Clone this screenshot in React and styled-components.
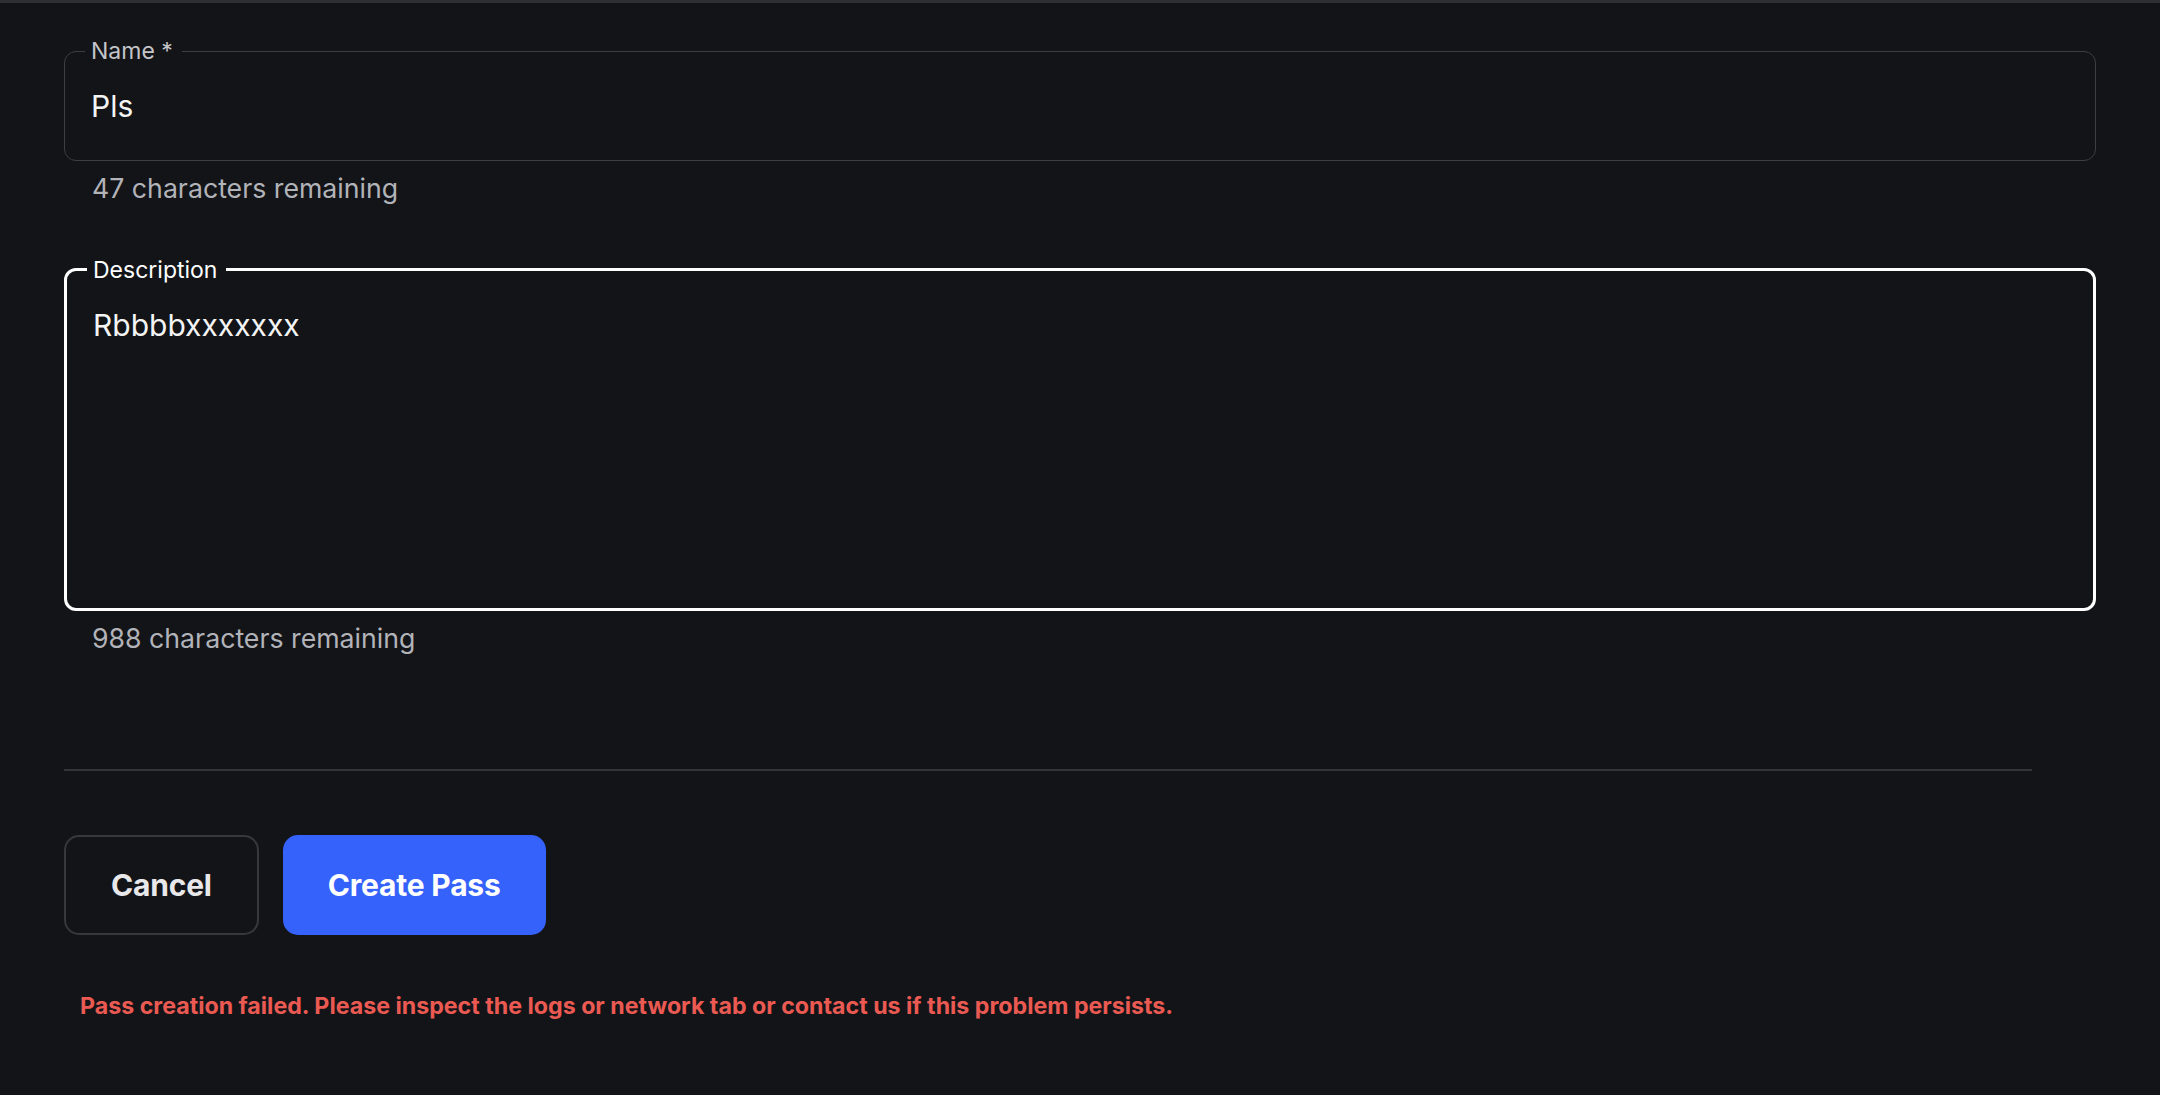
import React, { useState } from "react";
import styled, { createGlobalStyle } from "styled-components";

const GlobalStyle = createGlobalStyle`
  html, body {
    margin: 0;
    padding: 0;
    background: #131418;
  }
  body {
    font-family: Inter, "Noto Sans", "Liberation Sans", sans-serif;
    color: #f2f2f3;
  }
`;

const Page = styled.div`
  min-height: 1095px;
  box-sizing: border-box;
  border-top: 3px solid #2e2f33;
  padding: 34px 64px 0 64px;
`;

const Form = styled.form`
  display: flex;
  flex-direction: column;
`;

const Field = styled.fieldset`
  margin: 0;
  padding: 0 26px ${(p) => (p.$focused ? "34px" : "35.5px")} 26px;
  border: ${(p) => (p.$focused ? "3px solid #ffffff" : "1.5px solid #3d3e43")};
  border-radius: 12px;
  min-width: 0;
`;

const Legend = styled.legend`
  margin-left: -6px;
  padding: 0 9px 0 6px;
  font-size: 23px;
  line-height: 28px;
  color: ${(p) => (p.$focused ? "#ffffff" : "#c4c5c9")};
`;

const Input = styled.input`
  display: block;
  width: 100%;
  box-sizing: border-box;
  margin-top: 23px;
  padding: 0;
  border: none;
  outline: none;
  background: transparent;
  font-family: inherit;
  font-size: 30px;
  line-height: 36px;
  height: 36px;
  color: #f4f4f5;
`;

const TextArea = styled.textarea`
  display: block;
  width: 100%;
  box-sizing: border-box;
  margin-top: 23px;
  padding: 0;
  border: none;
  outline: none;
  resize: none;
  background: transparent;
  font-family: inherit;
  font-size: 30px;
  line-height: 36px;
  height: 267px;
  color: #f4f4f5;
`;

const Helper = styled.p`
  margin: 11px 0 0 28px;
  font-size: 26.7px;
  line-height: 32px;
  color: #b2b3b8;
`;

const Spacer = styled.div`
  height: ${(p) => p.$h}px;
`;

const Divider = styled.hr`
  margin: 115px 64px 0 0;
  border: none;
  height: 2px;
  background: #333438;
`;

const Actions = styled.div`
  display: flex;
  gap: 24px;
  margin-top: 64px;
`;

const Button = styled.button`
  height: 100px;
  padding: 0 ${(p) => (p.$primary ? "43px" : "45px")};
  box-sizing: border-box;
  border-radius: 15px;
  border: 2px solid ${(p) => (p.$primary ? "#3562fa" : "#37383d")};
  background: ${(p) => (p.$primary ? "#3562fa" : "transparent")};
  color: ${(p) => (p.$primary ? "#ffffff" : "#e8e8ea")};
  font-family: inherit;
  font-size: 30px;
  font-weight: 700;
  letter-spacing: -0.2px;
  cursor: pointer;
`;

const ErrorText = styled.p`
  margin: 57px 0 0 16px;
  font-size: 23.2px;
  line-height: 28px;
  font-weight: 700;
  color: #ea5a52;
`;

const App = () => {
  const [name, setName] = useState("Pls");
  const [desc, setDesc] = useState("Rbbbbxxxxxxx");

  return (
    <>
      <GlobalStyle />
      <Page>
        <Form onSubmit={(e) => e.preventDefault()}>
          <Field>
            <Legend>Name *</Legend>
            <Input value={name} onChange={(e) => setName(e.target.value)} />
          </Field>
          <Helper>{50 - name.length} characters remaining</Helper>
          <Spacer $h={52} />
          <Field $focused>
            <Legend $focused>Description</Legend>
            <TextArea value={desc} onChange={(e) => setDesc(e.target.value)} />
          </Field>
          <Helper>{1000 - desc.length} characters remaining</Helper>
          <Divider />
          <Actions>
            <Button type="button">Cancel</Button>
            <Button type="submit" $primary>
              Create Pass
            </Button>
          </Actions>
          <ErrorText>
            Pass creation failed. Please inspect the logs or network tab or
            contact us if this problem persists.
          </ErrorText>
        </Form>
      </Page>
    </>
  );
};

export default App;
